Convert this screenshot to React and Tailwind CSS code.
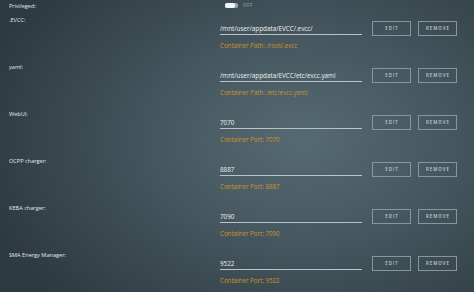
import React from "react";

const rows = [
  { label: ".EVCC:", value: "/mnt/user/appdata/EVCC/.evcc/", note: "Container Path: /root/.evcc" },
  { label: "yaml:", value: "/mnt/user/appdata/EVCC/etc/evcc.yaml", note: "Container Path: /etc/evcc.yaml" },
  { label: "WebUI:", value: "7070", note: "Container Port: 7070" },
  { label: "OCPP charger:", value: "8887", note: "Container Port: 8887" },
  { label: "KEBA charger:", value: "7090", note: "Container Port: 7090" },
  { label: "SMA Energy Manager:", value: "9522", note: "Container Port: 9522" },
];

function Btn({ children }) {
  return (
    <div className="h-[15px] w-[39px] border border-[#87969d] flex items-center justify-center text-[4.4px] font-semibold tracking-[1px] text-[#c3ccd0] leading-none pl-[1px]">
      {children}
    </div>
  );
}

export default function App() {
  return (
    <div
      className="w-[474px] h-[292px] overflow-hidden bg-[radial-gradient(ellipse_70%_80%_at_64%_48%,#566a73_0%,#45565e_45%,#2d3a40_100%)]"
      style={{ fontFamily: '"Open Sans", "Liberation Sans", sans-serif' }}
    >
      <div className="flex h-[14px] pl-[9px]">
        <div className="w-[211px] pt-[2px] text-[5.6px] leading-[8px] text-[#e4e9eb]">Privileged:</div>
        <div className="flex items-start pt-[3px] pl-[5px] gap-[5px]">
          <div className="w-[13px] h-[5px] rounded-[2px] bg-[#9aa6ab] flex">
            <div className="w-[10px] h-[5px] rounded-[2px] bg-[#f4f6f7]" />
          </div>
          <div className="text-[4.4px] leading-[5px] tracking-[0.6px] text-[#9fabb1]">OFF</div>
        </div>
      </div>
      {rows.map((r) => (
        <div key={r.label} className="flex h-[47px] pl-[9px]">
          <div className="w-[211px] pt-[2px] text-[5.6px] leading-[8px] text-[#e4e9eb]">{r.label}</div>
          <div className="flex flex-col pt-[7px]">
            <div className="flex items-start">
              <div className="w-[142px] h-[14px] border-b border-[#b9c3c8] text-[6.3px] leading-[13px] pt-[1px] text-[#eef1f2] whitespace-nowrap">
                {r.value}
              </div>
              <div className="ml-[10px]">
                <Btn>EDIT</Btn>
              </div>
              <div className="ml-[7px]">
                <Btn>REMOVE</Btn>
              </div>
            </div>
            <div className="mt-[6px] text-[6.2px] leading-[8px] text-[#d09328] whitespace-nowrap">{r.note}</div>
          </div>
        </div>
      ))}
    </div>
  );
}
